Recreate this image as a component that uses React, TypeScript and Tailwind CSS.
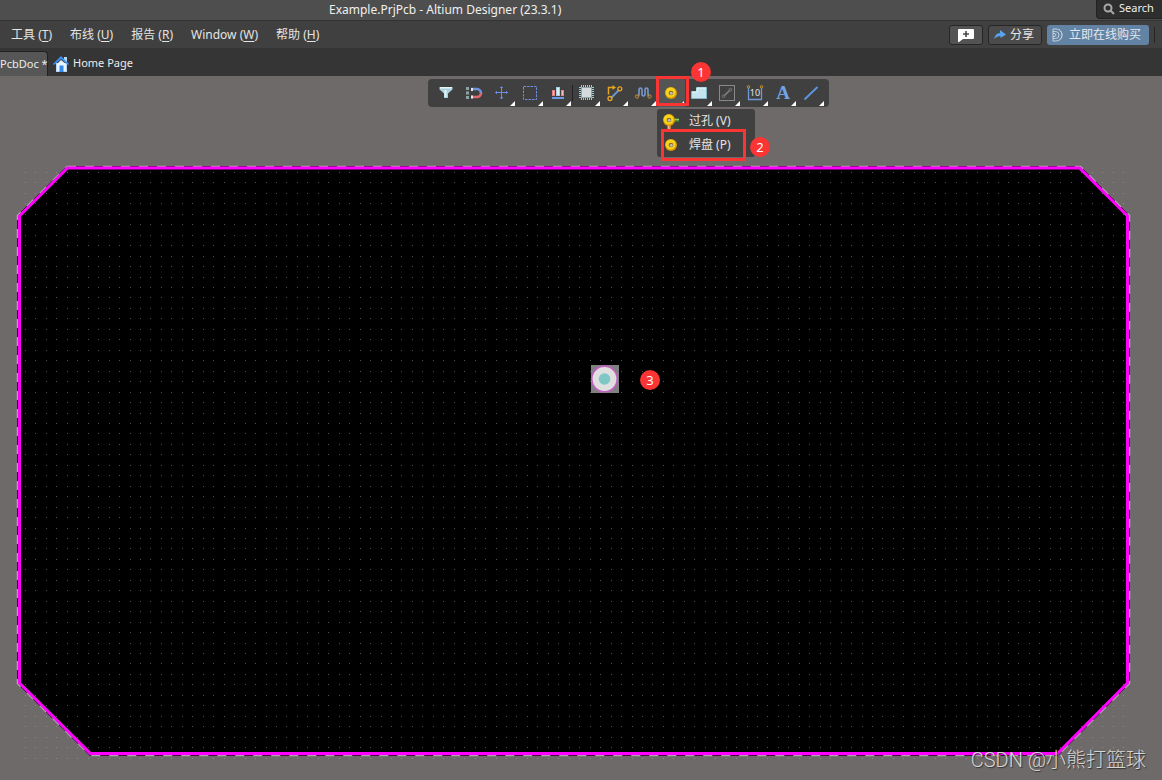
import type { ReactNode } from "react";

const menus = [
  { label: "工具", hotkey: "T" },
  { label: "布线", hotkey: "U" },
  { label: "报告", hotkey: "R" },
  { label: "Window", hotkey: "W" },
  { label: "帮助", hotkey: "H" },
];

function PadIcon() {
  return (
    <svg viewBox="0 0 20 20" className="size-5" aria-hidden="true">
      <circle cx="10" cy="10" r="6" fill="#d99a00" />
      <circle cx="9.6" cy="9.4" r="5" fill="#f8d21c" />
      <circle cx="10" cy="10" r="2.3" fill="#8a6414" />
      <circle cx="10.2" cy="10.2" r="1.5" fill="#b9bcc0" />
    </svg>
  );
}

function ViaIcon() {
  return (
    <svg viewBox="0 0 20 20" className="size-5" aria-hidden="true">
      <path d="M6.5 13h3v6h-3z" fill="#f2b27c" />
      <path d="M8.5 13h1v6h-1z" fill="#c98246" />
      <path d="M13 7.5h5v3h-5z" fill="#4f9a35" />
      <path d="M13 8h5v1h-5z" fill="#8ed06f" />
      <circle cx="8" cy="9" r="6" fill="#d99a00" />
      <circle cx="7.6" cy="8.5" r="5" fill="#f8d21c" />
      <circle cx="8" cy="9" r="2.3" fill="#8a6414" />
      <circle cx="8.2" cy="9.2" r="1.5" fill="#b9bcc0" />
    </svg>
  );
}

function Icon({ children }: { children: ReactNode }) {
  return (
    <svg viewBox="0 0 20 20" className="size-5" fill="none" aria-hidden="true">
      {children}
    </svg>
  );
}

const tools: { name: string; arrow: boolean; icon: ReactNode }[] = [
  {
    name: "Filter",
    arrow: false,
    icon: (
      <Icon>
        <path d="M3.5 4h13v2.500l-4.500 4V15H8v-4.500l-4.500-4z" fill="#a9cfdd" />
        <path d="M4 4h12v1.500H4zM8.500 7h2v7h-2z" fill="#e6f3f7" />
      </Icon>
    ),
  },
  {
    name: "Snapping",
    arrow: false,
    icon: (
      <Icon>
        <path d="M2 4h3v3H2zM2 8.500h3v3H2zM2 13h3v3H2z" fill="#8ba3a3" />
        <path d="M7 6h6a4.200 4.200 0 0 1 4 4.200" stroke="#6f93e0" strokeWidth="2.600" />
        <path d="M7 14h6a4 4 0 0 0 4-4" stroke="#e0686c" strokeWidth="2.600" />
        <path d="M7 5h2v3H7zM7 12.500h2v3H7z" fill="#dfe7f2" />
      </Icon>
    ),
  },
  {
    name: "Move",
    arrow: true,
    icon: (
      <Icon>
        <path d="M9.500 4v12M3.500 9.500h12" stroke="#6c8fe4" />
        <path d="m8 5 1.500-1.500L11 5M8 14l1.500 2 1.500-2M5 8 3.500 9.500 5 11M14 8l1.500 1.500L14 11" stroke="#6c8fe4" strokeWidth="0.800" />
      </Icon>
    ),
  },
  {
    name: "Select area",
    arrow: true,
    icon: (
      <Icon>
        <rect x="3.500" y="3.500" width="13" height="13" stroke="#6f8fe0" strokeDasharray="2.500 1" />
      </Icon>
    ),
  },
  {
    name: "Align",
    arrow: true,
    icon: (
      <Icon>
        <path d="M4 7h3v6H4zM13 7h3v6h-3z" fill="#e87f7f" />
        <path d="M5 8h1v4H5zM14 8h1v4h-1z" fill="#f7c0c0" />
        <path d="M8 4h4v9H8z" fill="#a5cfe0" />
        <path d="M9 5h2v7H9z" fill="#d8eff6" />
        <path d="M4 14h12v2H4z" fill="#6a9be8" />
      </Icon>
    ),
  },
  {
    name: "Component",
    arrow: true,
    icon: (
      <Icon>
        <path
          d="M4.500 2v15M6.500 2v15M8.500 2v15M10.500 2v15M12.500 2v15M14.500 2v15M2 4.500h15M2 6.500h15M2 8.500h15M2 10.500h15M2 12.500h15M2 14.500h15"
          stroke="#9fc8d8"
        />
        <path d="M4 4h11v11H4z" fill="#8fa3ac" />
        <path d="M5 5h9v9H5z" fill="#d5dadd" />
      </Icon>
    ),
  },
  {
    name: "Route",
    arrow: true,
    icon: (
      <Icon>
        <path d="M3.500 11.500v-7h5" stroke="#e5a51b" strokeWidth="1.500" />
        <path d="m7.500 2 3.500 2.500L7.500 7z" fill="#e5a51b" />
        <path d="m6 15 8-8" stroke="#6f93c9" strokeWidth="2" />
        <circle cx="14.800" cy="5.800" r="2" stroke="#e5a51b" strokeWidth="1.300" />
        <circle cx="5" cy="15.500" r="2" stroke="#e5a51b" strokeWidth="1.300" />
      </Icon>
    ),
  },
  {
    name: "Length tuning",
    arrow: true,
    icon: (
      <Icon>
        <path
          d="M4.500 13Q6 13 6 11V7.500Q6 5 7.500 5T9 7.500V11q0 2 1.500 2t1.500-2V7.500Q12 5 13.500 5T15 7.500V11q0 2 1.500 2"
          stroke="#7798ce"
          strokeWidth="1.600"
        />
        <circle cx="4" cy="13.500" r="1.700" stroke="#c58b2a" />
        <circle cx="16.500" cy="13.500" r="1.700" stroke="#c58b2a" />
      </Icon>
    ),
  },
  { name: "Pad and via", arrow: true, icon: <PadIcon /> },
  {
    name: "Polygon",
    arrow: true,
    icon: (
      <Icon>
        <path d="M2.500 8.500h5v-4h10v11h-15z" fill="#c4e4ef" stroke="#84b5c7" />
        <path d="M3 9h5V5h9" stroke="#eefafd" />
      </Icon>
    ),
  },
  {
    name: "Keepout",
    arrow: true,
    icon: (
      <Icon>
        <rect x="2.500" y="2.500" width="15" height="15" stroke="#898989" />
        <path d="m7.500 12.500 5-5" stroke="#7e8790" strokeWidth="1.500" />
        <circle cx="6.500" cy="13.300" r="1.300" stroke="#7e7e7e" />
        <circle cx="13.500" cy="6.700" r="1.300" stroke="#7e7e7e" />
      </Icon>
    ),
  },
  {
    name: "Dimension",
    arrow: true,
    icon: (
      <Icon>
        <path d="M3.500 5v11.500h13V5" stroke="#6f98d8" strokeWidth="1.300" />
        <circle cx="3.500" cy="3.800" r="1.200" stroke="#d29a31" />
        <circle cx="16.500" cy="3.800" r="1.200" stroke="#d29a31" />
        <text x="10" y="13" textAnchor="middle" fontSize="9" fill="#e6e6e6" fontFamily="Noto Sans, sans-serif">
          10
        </text>
      </Icon>
    ),
  },
  {
    name: "Text",
    arrow: true,
    icon: (
      <span className="block text-center font-['Liberation_Serif',serif] text-[19px] leading-5 font-bold text-[#70a4e4]">
        A
      </span>
    ),
  },
  {
    name: "Line",
    arrow: true,
    icon: (
      <Icon>
        <path d="M3.500 16.500 16.500 4" stroke="#5c98e2" strokeWidth="1.800" />
      </Icon>
    ),
  },
];

// Snap grid, one pixel per node
const GRID_STEP = 10.457;
const gridDots = Array.from({ length: 57 }, (_, row) =>
  Array.from(
    { length: 106 },
    (_, col) => `M${Math.round(25 + col * GRID_STEP)} ${Math.round(172 + row * GRID_STEP)}h1v1h-1z`
  ).join("")
).join("");

const OUTLINE = "67.500,168 1079.500,168 1127.500,216 1127.500,683 1057.500,753.500 90.500,753.500 19.500,683 19.500,216";
const OUTER = "67,166.500 1080.500,166.500 1129.500,215.500 1129.500,683.500 1058,755.500 90,755.500 17.500,683.500 17.500,215.500";

function Board() {
  return (
    <svg viewBox="0 76 1162 704" className="block w-full" role="img" aria-label="PCB board">
      <polygon points={OUTLINE} fill="#000" />
      <path d={gridDots} fill="#b4b4b4" fillOpacity="0.45" shapeRendering="crispEdges" />
      <polygon points={OUTER} fill="none" stroke="#4a0a4a" strokeWidth="1" />
      <polygon points={OUTER} fill="none" stroke="#a9a7a7" strokeWidth="1.500" strokeDasharray="9 9" />
      <polygon points={OUTLINE} fill="none" stroke="#ff00ff" strokeWidth="3" />

      <rect x="591" y="365" width="28" height="28" fill="#808080" />
      <circle cx="604.500" cy="379" r="12.800" fill="#e0dfe0" stroke="#bd62bd" strokeWidth="1.800" />
      <circle cx="604.500" cy="379" r="5.800" fill="#7dc8c6" />
    </svg>
  );
}

function Callout({ n, className }: { n: number; className: string }) {
  return (
    <span
      className={`absolute z-20 flex size-5 items-center justify-center rounded-full bg-[#fb3434] text-[13px] leading-5 text-white ${className}`}
    >
      {n}
    </span>
  );
}

function TitleBar() {
  return (
    <header className="flex h-5 justify-between bg-[#4e4e4e]">
      <h1 className="pl-[329px] text-xs leading-5 text-[#f0f0f0]">Example.PrjPcb - Altium Designer (23.3.1)</h1>
      <button className="flex h-[19px] w-[66px] items-center gap-1 rounded-bl-sm border-b border-l border-[#222] bg-[#2e2e2e] pl-1.5 text-[11px] text-[#f0f0f0]">
        <svg viewBox="0 0 12 12" className="size-3" fill="none" stroke="#a8a8a8" strokeWidth="2" aria-hidden="true">
          <circle cx="5" cy="5" r="3.500" />
          <path d="m7.500 7.500 3.500 3.500" />
        </svg>
        <span className="pb-0.5">Search</span>
      </button>
    </header>
  );
}

function MenuBar() {
  return (
    <div className="flex h-7 items-center justify-between border-t border-[#333] bg-[#404040] pl-[11px]">
      <nav className="flex gap-[18px] text-xs text-[#e4e4e4]">
        {menus.map((m) => (
          <button key={m.hotkey} className="whitespace-nowrap">
            {m.label} (<span className="underline underline-offset-2">{m.hotkey}</span>)
          </button>
        ))}
      </nav>
      <div className="flex items-center gap-[5px] text-xs">
        <button
          aria-label="Comment"
          className="flex h-5 w-[34px] items-center justify-center rounded-[3px] border border-[#262626] bg-[#535353]"
        >
          <svg viewBox="0 0 18 14" className="h-3.5 w-[18px]" aria-hidden="true">
            <path d="M2 1h14q1 0 1 1v8q0 1-1 1H6l-4 3H1V2q0-1 1-1z" fill="#fff" />
            <path d="M9 3v6M6 6h6" stroke="#484848" strokeWidth="1.600" />
          </svg>
        </button>
        <button className="flex h-5 w-[54px] items-center gap-1 rounded-[3px] border border-[#262626] bg-[#4b4b4b] pl-[5px] text-[#e6e6e6]">
          <svg viewBox="0 0 12 12" className="size-3" aria-hidden="true">
            <path d="M0 10c1-4 3-6 6-6V1l6 4.500L6.500 9V7C4 7 2 8 0 10z" fill="#57a5f2" />
          </svg>
          分享
        </button>
        <button className="flex h-5 w-[102px] items-center gap-1.5 rounded-[3px] bg-[#6283a4] pl-1 text-[#e0e8f0]">
          <svg viewBox="0 0 12 14" className="h-3.5 w-3" fill="none" stroke="#cfd8df" strokeWidth="0.900" aria-hidden="true">
            <path d="M2 1h3a6 6 0 0 1 0 12H2z" />
            <path d="M2 3.500h2.500a3.500 3.500 0 0 1 0 7H2M2 5.500h2q2 1.500 0 3H2" />
            <path d="M8 1.500a6.500 6.500 0 0 1 0 11" strokeDasharray="1.500 1" />
          </svg>
          立即在线购买
        </button>
        <span className="mr-[7px] h-4 w-px bg-[#262626]" />
      </div>
    </div>
  );
}

function DocumentTabs() {
  return (
    <div className="flex h-7 items-end bg-[#353535] text-[11px] text-[#ececec]">
      <button className="flex h-[25px] w-12 items-center rounded-tr-sm border-t border-r border-[#222] bg-[#565656] whitespace-nowrap">
        PcbDoc *
      </button>
      <button className="flex h-[25px] items-center gap-1 pl-[5px]">
        <svg viewBox="0 0 16 16" className="size-4" aria-hidden="true">
          <path d="M11 1h3v5h-3zM3 7h11v9H3z" fill="#b7d5f0" />
          <path d="M4 8l4-4 5 4v7H4z" fill="#e9f3fb" />
          <path d="M0 8 8 0l8 8-1 1-7-6-7 6z" fill="#3c91ef" />
          <path d="M6.500 9.500h4V16h-4z" fill="#3489ec" />
        </svg>
        Home Page
      </button>
    </div>
  );
}

function ActiveBar() {
  return (
    <div role="toolbar" className="absolute top-[3px] left-[428px] flex h-7 rounded-sm bg-[#404040] px-1">
      {tools.map((t) => (
        <div key={t.name} className="flex items-center">
          <button
            aria-label={t.name}
            className={`relative flex h-7 w-7 items-center justify-center ${t.name === "Pad and via" ? "bg-[#555]" : ""}`}
          >
            {t.icon}
            {t.arrow && (
              <svg viewBox="0 0 5 5" className="absolute right-px bottom-px size-[5px]" aria-hidden="true">
                <path d="M5 0v5H0z" fill="#fff" />
              </svg>
            )}
          </button>
          {t.name === "Align" && <span className="h-4 w-px bg-[#222]" />}
        </div>
      ))}
    </div>
  );
}

function PadMenu() {
  return (
    <div
      role="menu"
      className="absolute top-[33px] left-[657px] w-[98px] rounded-[3px] bg-[#404040] text-xs text-[#e4e4e4]"
    >
      <button role="menuitem" className="flex h-6 w-full items-center gap-2 pl-1">
        <ViaIcon />
        过孔 (V)
      </button>
      <button role="menuitem" className="flex h-6 w-full items-center gap-2 pl-1">
        <PadIcon />
        焊盘 (P)
      </button>
    </div>
  );
}

export default function App() {
  return (
    <div className="flex min-h-screen flex-col overflow-hidden bg-[#6e6a69] font-['Noto_Sans','Noto_Sans_CJK_SC',sans-serif]">
      <TitleBar />
      <MenuBar />
      <DocumentTabs />
      <main className="relative flex-1">
        <Board />
        <ActiveBar />
        <PadMenu />

        <div className="pointer-events-none absolute top-0 left-[656px] h-[30px] w-[33px] border-3 border-[#fb3434]" />
        <div className="pointer-events-none absolute top-[53px] left-[661px] h-8 w-[85px] border-3 border-[#fb3434]" />
        <Callout n={1} className="-top-3.5 left-[691px]" />
        <Callout n={2} className="top-[61px] left-[750px]" />
        <Callout n={3} className="top-[294px] left-[640px]" />

        <p className="absolute right-4 bottom-1.5 font-['Roboto','Noto_Sans_CJK_SC',sans-serif] text-xl leading-7 font-light text-[#d6d6d6] [text-shadow:1px_1px_1px_#333]">
          CSDN @小熊打篮球
        </p>
      </main>
    </div>
  );
}
